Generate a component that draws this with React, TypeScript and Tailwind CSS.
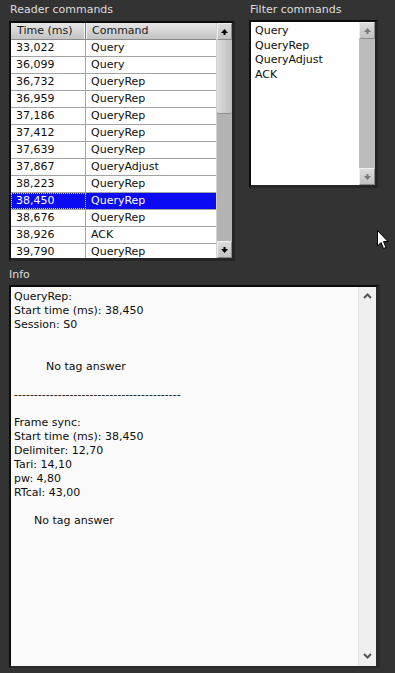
const readerRows = [
  ["33,022", "Query"],
  ["36,099", "Query"],
  ["36,732", "QueryRep"],
  ["36,959", "QueryRep"],
  ["37,186", "QueryRep"],
  ["37,412", "QueryRep"],
  ["37,639", "QueryRep"],
  ["37,867", "QueryAdjust"],
  ["38,223", "QueryRep"],
  ["38,450", "QueryRep"],
  ["38,676", "QueryRep"],
  ["38,926", "ACK"],
  ["39,790", "QueryRep"],
]

const filterItems = ["Query", "QueryRep", "QueryAdjust", "ACK"]

const selectedIndex = 9

function Arrow({ up, color = "#000" }: { up?: boolean; color?: string }) {
  return (
    <svg width="9" height="8" viewBox="0 0 9 8" className={up ? "" : "rotate-180"}>
      <polygon points="4.5,1 8,5 1,5" fill={color} />
      <rect x="3.5" y="5" width="2" height="2" fill={color} />
    </svg>
  )
}

function Chevron({ up }: { up?: boolean }) {
  return (
    <svg width="9" height="6" viewBox="0 0 9 6" className={up ? "" : "rotate-180"}>
      <polyline points="1,5 4.5,1.5 8,5" fill="none" stroke="#555" strokeWidth="2" />
    </svg>
  )
}

function ScrollButton({ up, disabled }: { up?: boolean; disabled?: boolean }) {
  return (
    <div className="h-[17px] flex items-center justify-center bg-gradient-to-b from-[#dcdcdc] to-[#c2c2c2] border border-t-[#f0f0f0] border-l-[#f0f0f0] border-r-[#8c8c8c] border-b-[#8c8c8c]">
      <Arrow up={up} color={disabled ? "#7a7a7a" : "#000"} />
    </div>
  )
}

export default function App() {
  return (
    <div className="relative w-[395px] h-[673px] overflow-hidden bg-[#333333] text-[11px] font-['DejaVu_Sans',sans-serif] select-none">
      {/* top row */}
      <div className="flex pt-[3px] h-[262px]">
        {/* Reader commands */}
        <div className="ml-[9px] w-[226px] flex flex-col">
          <div className="h-[18px] leading-[14px] text-[#dedede] px-px">Reader commands</div>
          <div className="h-[240px] flex border-t-2 border-l-2 border-t-[#0c0c0c] border-l-[#0c0c0c] border-r-[3px] border-b-[3px] border-r-[#262626] border-b-[#262626] bg-white">
            <div className="flex-1 min-w-0 overflow-hidden">
              <div className="flex h-[17px] bg-gradient-to-b from-[#e6e6e6] to-[#c3c3c3] border-b border-[#8a8a8a] text-[#1a1a1a] leading-[16px]">
                <div className="w-[75px] pl-[6px] border-r border-[#7d7d7d] shadow-[inset_-1px_0_0_#f4f4f4]">Time (ms)</div>
                <div className="flex-1 pl-[5px] border-l border-[#f4f4f4]">Command</div>
              </div>
              {readerRows.map(([time, cmd], i) => {
                const selected = i === selectedIndex
                return (
                  <div key={i} className="flex h-[17px] leading-[15px] border-b border-[#a3a3a3]">
                    <div
                      className={
                        selected
                          ? "w-[75px] pl-[4px] bg-[#0a0af5] text-white border border-dotted border-[#d8d8d8] leading-[14px]"
                          : "w-[75px] pl-[5px] border-r border-[#a3a3a3] text-[#0d0d0d]"
                      }
                    >
                      {time}
                    </div>
                    <div
                      className={
                        selected
                          ? "flex-1 pl-[5px] bg-[#0a0af5] text-white"
                          : "flex-1 pl-[5px] text-[#0d0d0d]"
                      }
                    >
                      {cmd}
                    </div>
                  </div>
                )
              })}
            </div>
            {/* scrollbar */}
            <div className="w-[16px] flex flex-col bg-[#b3b3b3] border-l border-[#d0d0d0]">
              <ScrollButton up />
              <div className="h-[74px] bg-gradient-to-r from-[#dedede] to-[#bdbdbd] rounded-b-[3px] border-b border-[#8e8e8e]" />
              <div className="flex-1" />
              <ScrollButton />
            </div>
          </div>
        </div>

        {/* Filter commands */}
        <div className="ml-[14px] w-[129px] flex flex-col">
          <div className="h-[17px] leading-[14px] text-[#dedede] pl-[1px]">Filter commands</div>
          <div className="h-[168px] flex border-t-2 border-l-2 border-t-[#0c0c0c] border-l-[#0c0c0c] border-r-[3px] border-b-[3px] border-r-[#262626] border-b-[#262626] bg-white">
            <div className="flex-1 pl-[4px] pt-[2px] leading-[14.7px] text-[#0d0d0d]">
              {filterItems.map((f) => (
                <div key={f}>{f}</div>
              ))}
            </div>
            <div className="w-[16px] flex flex-col bg-[#bcbcbc]">
              <ScrollButton up disabled />
              <div className="flex-1" />
              <ScrollButton disabled />
            </div>
          </div>
        </div>
      </div>

      {/* Info */}
      <div className="ml-[9px] w-[371px] mt-[6px] flex flex-col">
        <div className="h-[17px] leading-[14px] text-[#dedede]">Info</div>
        <div className="h-[383px] flex border-t-2 border-l-2 border-t-[#0c0c0c] border-l-[#0c0c0c] border-r-4 border-b-2 border-r-[#2a2a2a] border-b-[#2a2a2a]">
          <div className="flex-1 bg-[#fafafa] px-[3px] pt-[3px] leading-[14px] text-[#0d0d0d]">
            <div>QueryRep:</div>
            <div>Start time (ms): 38,450</div>
            <div>Session: S0</div>
            <div className="h-[14px]" />
            <div className="h-[14px]" />
            <div className="pl-[32px]">No tag answer</div>
            <div className="h-[14px]" />
            <div className="whitespace-nowrap">{"-".repeat(42)}</div>
            <div className="h-[14px]" />
            <div>Frame sync:</div>
            <div>Start time (ms): 38,450</div>
            <div>Delimiter: 12,70</div>
            <div>Tari: 14,10</div>
            <div>pw: 4,80</div>
            <div>RTcal: 43,00</div>
            <div className="h-[14px]" />
            <div className="pl-[20px]">No tag answer</div>
          </div>
          <div className="w-[18px] bg-[#efefef] border-l border-[#e2e2e2] flex flex-col items-center justify-between pt-[6px] pb-[7px]">
            <Chevron up />
            <Chevron />
          </div>
        </div>
      </div>

      {/* mouse cursor */}
      <svg className="absolute left-[377px] top-[230px]" width="12" height="20" viewBox="0 0 12 20">
        <polygon
          points="0.5,0.5 0.5,16 4,12.5 6.5,18.5 9,17.5 6.5,11.5 11,11.5"
          fill="#fff"
          stroke="#000"
          strokeWidth="1"
          strokeLinejoin="round"
        />
      </svg>
    </div>
  )
}
